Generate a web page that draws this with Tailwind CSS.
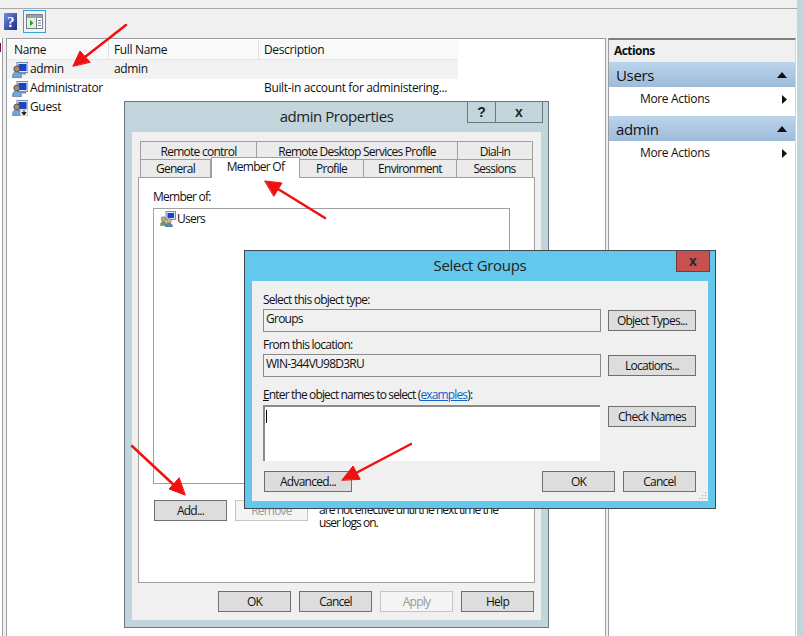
<!doctype html>
<html>
<head>
<meta charset="utf-8">
<script src="https://cdn.jsdelivr.net/npm/@tailwindcss/browser@4"></script>
</head>
<body class="m-0 bg-white">
<div class="relative w-[804px] h-[636px] overflow-hidden bg-[#c2d5dc] text-[12px] leading-[14px] text-[#111] font-['Open_Sans',sans-serif] tracking-[-0.35px]">

  <div class="w-[797px] h-full bg-[#f0f0f0] flex flex-col">
    <!-- Toolbar -->
    <div class="h-[9px] border-b border-[#a8a8a8]"></div>
    <div class="h-[29px] flex items-start gap-[6px] pl-[4px] pt-[1px]">
      <svg class="mt-[3px]" width="13" height="17" viewBox="0 0 13 17"><defs><linearGradient id="hb" x1="0" y1="0" x2="1" y2="1"><stop offset="0" stop-color="#6f8fdc"/><stop offset="1" stop-color="#1c2a8c"/></linearGradient></defs><rect width="13" height="17" fill="url(#hb)"/><text x="6.500" y="14" font-size="15" font-weight="700" fill="#fff" text-anchor="middle" font-family="Liberation Serif">?</text></svg>
      <div class="w-[23px] h-[23px] border border-[#3aa0dc] bg-[#eaf4fb] flex items-center justify-center">
        <svg width="17" height="15" viewBox="0 0 17 15"><rect x=".5" y=".5" width="16" height="14" fill="#fff" stroke="#7a8086"/><rect x="1" y="1" width="15" height="3" fill="#9aa0a6"/><rect x="1" y="4" width="9" height="10" fill="#e4f0dc"/><path d="M4 6l3.500 3-3.500 3z" fill="#22a033"/><path d="M10.500 4v10" stroke="#7a8086"/><path d="M12 6.500h3M12 9h3M12 11.500h3" stroke="#5a7fa9"/></svg>
      </div>
    </div>

    <!-- Main split -->
    <div class="flex flex-1">
      <div class="w-[6px] flex">
        <div class="w-[2px] bg-white relative"><div class="w-px h-[9px] mt-[5px] bg-[#7a1040]"></div></div>
        <div class="w-px bg-[#9a9ea2]"></div>
      </div>
      <!-- List pane -->
      <div class="w-[600px] border-l border-t border-r border-[#9a9ea2] bg-white pt-[1px]">
        <div class="flex h-[20px] w-[451px] bg-[#f9f9f9] border-b border-[#e6e6e6]">
          <div class="w-[102px] border-r border-[#e0e0e0] pl-[7px] flex items-center">Name</div>
          <div class="w-[150px] border-r border-[#e0e0e0] pl-[5px] flex items-center">Full Name</div>
          <div class="w-[199px] pl-[5px] flex items-center">Description</div>
        </div>
        <div class="flex h-[19px] w-[451px] bg-[#f2f2f2] items-center">
          <div class="w-[102px] pl-[5px] flex items-center gap-[2px]"><svg width="16" height="16" viewBox="0 0 16 16"><use href="#usr"/></svg><span class="-translate-y-px">admin</span></div>
          <div class="w-[150px] pl-[5px] -translate-y-px">admin</div>
        </div>
        <div class="flex h-[19px] w-[451px] items-center">
          <div class="w-[102px] pl-[5px] flex items-center gap-[2px] whitespace-nowrap"><svg width="16" height="16" viewBox="0 0 16 16"><use href="#usr"/></svg><span class="-translate-y-px">Administrator</span></div>
          <div class="w-[150px]"></div>
          <div class="pl-[5px] whitespace-nowrap -translate-y-px">Built-in account for administering...</div>
        </div>
        <div class="flex h-[19px] w-[451px] items-center">
          <div class="w-[102px] pl-[5px] flex items-center gap-[2px]"><svg width="16" height="16" viewBox="0 0 16 16"><use href="#usr"/><rect x="8" y="9" width="8" height="7" rx="1" fill="#eee" stroke="#888" stroke-width=".5"/><path d="M12 10v3M10 12.500h4L12 15z" stroke="#222" fill="#222"/></svg><span class="-translate-y-px">Guest</span></div>
        </div>
      </div>
      <div class="w-[2px]"></div>
      <!-- Actions pane -->
      <div class="w-[188px] border-l border-r border-l-[#9a9ea2] border-r-[#d4d4d4] border-t-2 border-t-[#808080] bg-white">
        <div class="h-[22px] bg-[#f0f0f0] flex items-center pl-[5px] font-bold tracking-[-0.55px]">Actions</div>
        <div class="h-[25px] bg-gradient-to-b from-[#bcd4ec] to-[#9dbbd9] flex items-center justify-between pl-[7px] pr-[8px] text-[15px] font-normal"><span>Users</span><svg width="10" height="6" viewBox="0 0 10 6"><path d="M5 0l5 6H0z" fill="#111"/></svg></div>
        <div class="h-[29px] flex items-center justify-between pl-[31px] pr-[8px] pb-[5px]"><span>More Actions</span><svg width="5" height="9" viewBox="0 0 5 9"><path d="M0 0l5 4.500L0 9z" fill="#111"/></svg></div>
        <div class="h-[25px] bg-gradient-to-b from-[#bcd4ec] to-[#9dbbd9] flex items-center justify-between pl-[7px] pr-[8px] text-[15px]"><span>admin</span><svg width="10" height="6" viewBox="0 0 10 6"><path d="M5 0l5 6H0z" fill="#111"/></svg></div>
        <div class="h-[29px] flex items-center justify-between pl-[31px] pr-[8px] pb-[5px]"><span>More Actions</span><svg width="5" height="9" viewBox="0 0 5 9"><path d="M0 0l5 4.500L0 9z" fill="#111"/></svg></div>
      </div>
      <div class="w-px bg-white"></div>
    </div>
  </div>

  <!-- Properties window -->
  <div class="absolute left-[124px] top-[101px] w-[425px] h-[527px] bg-[#c2d5dc] border border-[#69777f] flex flex-col">
    <div class="h-[30px] pb-[2px] relative flex items-center justify-center text-[15px] tracking-[-0.45px] text-[#222]">admin Properties
      <div class="absolute right-[5px] top-0 flex h-[21px] border-x border-b border-[#69777f] bg-[#c2d5dc] font-bold text-[14px] tracking-normal font-['Liberation_Sans',sans-serif]">
        <div class="w-[28px] flex items-center justify-center border-r border-[#69777f]">?</div>
        <div class="w-[46px] flex items-center justify-center">x</div>
      </div>
    </div>
    <div class="mx-[7px] mb-[7px] flex-1 bg-[#f0f0f0] px-[6px] pt-[9px] flex flex-col tracking-[-0.75px]">
      <div class="flex pl-[2px] h-[18px] text-center">
        <div class="w-[117px] bg-[#ebebeb] border border-[#a0a0a0] border-b-0 pt-[3px]">Remote control</div>
        <div class="w-[201px] bg-[#ebebeb] border-t border-r border-[#a0a0a0] pt-[3px]">Remote Desktop Services Profile</div>
        <div class="w-[75px] bg-[#ebebeb] border-t border-r border-[#a0a0a0] pt-[3px]">Dial-in</div>
      </div>
      <div class="flex pl-[2px] h-[18px] text-center relative z-10">
        <div class="w-[71px] bg-[#ebebeb] border border-[#a0a0a0] border-b-0 leading-[17px]">General</div>
        <div class="w-[89px] h-[21px] -mt-[2px] pt-[2px] bg-white border border-[#a0a0a0] border-b-0">Member Of</div>
        <div class="w-[64px] bg-[#ebebeb] border-t border-r border-[#a0a0a0] leading-[17px]">Profile</div>
        <div class="w-[93px] bg-[#ebebeb] border-t border-r border-[#a0a0a0] leading-[17px]">Environment</div>
        <div class="w-[76px] bg-[#ebebeb] border-t border-r border-[#a0a0a0] leading-[17px]">Sessions</div>
      </div>
      <div class="w-[397px] h-[406px] bg-white border border-[#a0a0a0] pl-[14px] pt-[12px] flex flex-col">
        <div class="h-[18px]">Member of:</div>
        <div class="w-[357px] h-[276px] border border-[#a0a0a0] pl-[6px] pt-[2px] flex items-start gap-[1px]">
          <svg width="16" height="16" viewBox="0 0 16 16"><use href="#grp"/></svg><span class="leading-[16px]">Users</span>
        </div>
        <div class="flex mt-[16px] pl-[1px]">
          <div class="w-[73px] h-[21px] border border-[#707070] bg-[#dddddd] flex items-center justify-center">Add...</div>
          <div class="w-[73px] h-[21px] ml-[8px] border border-[#c4c4c4] bg-[#f4f4f4] text-[#9a9a9a] flex items-center justify-center">Remove</div>
          <div class="ml-[11px] w-[200px] mt-[3px] leading-[13px] whitespace-nowrap tracking-[-0.95px]">are not effective until the next time the<br>user logs on.</div>
        </div>
      </div>
      <div class="flex justify-end gap-[8px] mt-[8px] pr-[1px]">
        <div class="w-[73px] h-[21px] border border-[#707070] bg-[#dddddd] flex items-center justify-center">OK</div>
        <div class="w-[73px] h-[21px] border border-[#707070] bg-[#dddddd] flex items-center justify-center">Cancel</div>
        <div class="w-[73px] h-[21px] border border-[#c4c4c4] bg-[#f4f4f4] text-[#9a9a9a] flex items-center justify-center">Apply</div>
        <div class="w-[73px] h-[21px] border border-[#707070] bg-[#dddddd] flex items-center justify-center">Help</div>
      </div>
    </div>
  </div>

  <!-- Select Groups window -->
  <div class="absolute left-[244px] top-[250px] w-[472px] h-[259px] bg-[#63c8eb] border border-[#3d4a52] flex flex-col">
    <div class="h-[30px] pb-[2px] relative flex items-center justify-center text-[15px] tracking-[-0.3px] text-[#222]">Select Groups
      <div class="absolute right-[5px] top-0 w-[34px] h-[21px] bg-[#c75050] border-x border-b border-[#7a3a3a] flex items-center justify-center font-bold text-[14px] tracking-normal font-['Liberation_Sans',sans-serif]">x</div>
    </div>
    <div class="mx-[7px] mb-[7px] flex-1 bg-[#f0f0f0] pl-[11px] pt-[12px] relative tracking-[-0.75px]">
      <div class="h-[16px]">Select this object type:</div>
      <div class="flex items-center h-[23px]">
        <div class="w-[338px] h-[23px] border border-[#8a8a8a] pl-[2px] leading-[18px]">Groups</div>
        <div class="w-[88px] h-[21px] ml-[7px] border border-[#707070] bg-[#dddddd] flex items-center justify-center">Object Types...</div>
      </div>
      <div class="h-[22px] pt-[6px]">From this location:</div>
      <div class="flex items-center h-[23px]">
        <div class="w-[338px] h-[23px] border border-[#8a8a8a] pl-[2px] leading-[18px]">WIN-344VU98D3RU</div>
        <div class="w-[88px] h-[21px] ml-[7px] border border-[#707070] bg-[#dddddd] flex items-center justify-center">Locations...</div>
      </div>
      <div class="h-[28px] pt-[11px] tracking-[-0.85px]"><span class="underline">E</span>nter the object names to select (<span class="text-[#0a66c8] underline">examples</span>):</div>
      <div class="flex items-start h-[56px]">
        <div class="w-[337px] h-[56px] bg-white border-l-2 border-t-2 border-[#8a8a8a] pl-[1px] pt-[3px]"><div class="w-px h-[13px] bg-black"></div></div>
        <div class="w-[88px] h-[21px] mt-[1px] ml-[8px] border border-[#707070] bg-[#dddddd] flex items-center justify-center">Check Names</div>
      </div>
      <div class="flex mt-[10px] pl-[1px] pr-[12px] justify-between">
        <div class="w-[88px] h-[21px] border border-[#707070] bg-[#dddddd] flex items-center justify-center">Advanced...</div>
        <div class="flex gap-[8px]">
          <div class="w-[73px] h-[21px] border border-[#707070] bg-[#dddddd] flex items-center justify-center">OK</div>
          <div class="w-[73px] h-[21px] border border-[#707070] bg-[#dddddd] flex items-center justify-center">Cancel</div>
        </div>
      </div>
      <svg class="absolute right-[1px] bottom-[1px]" width="9" height="9" viewBox="0 0 9 9"><path d="M7 1h1v1H7zM4 4h1v1H4zM7 4h1v1H7zM1 7h1v1H1zM4 7h1v1H4zM7 7h1v1H7z" fill="#a0a0a0"/></svg>
    </div>
  </div>

  <!-- Red arrows -->
  <svg class="absolute left-0 top-0 pointer-events-none" width="804" height="636" viewBox="0 0 804 636">
    <g stroke="#f01010" stroke-width="2.500" stroke-linecap="round" fill="#f01010">
      <path d="M126 25L85 57" /><path d="M73 66L80 51L90 62z" stroke-width="1"/>
      <path d="M325 218L278 189"/><path d="M265 181L282 183L274 196z" stroke-width="1"/>
      <path d="M132 446L175 486"/><path d="M185 495L169 489L179 478z" stroke-width="1"/>
      <path d="M411 444L356 473"/><path d="M342 480L353 466L360 479z" stroke-width="1"/>
    </g>
  </svg>

  <!-- Icon defs -->
  <svg width="0" height="0" class="absolute">
    <defs>
      <g id="usr">
        <rect x="5" y="0.500" width="11" height="10" fill="#dfe8f4" stroke="#5a6f96" stroke-width=".8"/>
        <rect x="6.500" y="2" width="8" height="7" fill="#1444c8"/>
        <rect x="9" y="10.500" width="5" height="2" fill="#8090a8"/>
        <circle cx="4.800" cy="7" r="3" fill="#a98a68" stroke="#4a4238" stroke-width=".8"/>
        <path d="M0.500 15.500c0-4.500 1.500-5.500 4.300-5.500s4.700 1 4.700 5.500z" fill="#6ea6e0" stroke="#3f5878" stroke-width=".5"/>
      </g>
      <g id="grp">
        <rect x="6" y="0.500" width="9.500" height="8" fill="#dfe8f4" stroke="#5a6f96" stroke-width=".8"/>
        <rect x="7.500" y="2" width="6.500" height="5" fill="#1444c8"/>
        <circle cx="3.500" cy="8" r="2.300" fill="#c8a880" stroke="#59503f" stroke-width=".5"/>
        <path d="M0.500 14.500c0-3 1-4 3-4s3.500 1 3.500 4z" fill="#70a060" stroke="#4a6a40" stroke-width=".5"/>
        <circle cx="9" cy="10" r="2.300" fill="#d8b890" stroke="#59503f" stroke-width=".5"/>
        <path d="M5.500 16c0-3 1.500-3.800 3.500-3.800s3.500 .8 3.500 3.800z" fill="#5d87b8" stroke="#3f5878" stroke-width=".5"/>
      </g>
    </defs>
  </svg>
</div>
</body>
</html>
